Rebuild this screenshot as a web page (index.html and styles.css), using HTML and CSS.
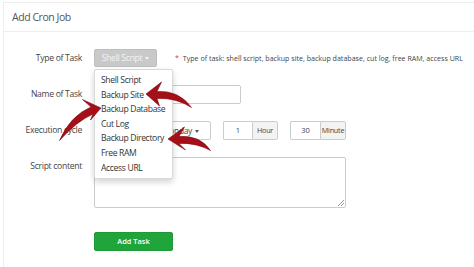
FILE: index.html
```html
<!DOCTYPE html>
<html>
<head>
<meta charset="utf-8">
<link rel="stylesheet" href="styles.css">
</head>
<body>
<div class="card">
  <div class="card-head">Add Cron Job</div>
  <div class="form">
    <div class="row">
      <div class="lbl">Type of Task</div>
      <div class="ctrl">
        <div class="dd">
          <div class="btn-grey">Shell Script <span class="caret"></span></div>
          <ul class="menu">
            <li>Shell Script</li>
            <li>Backup Site</li>
            <li>Backup Database</li>
            <li>Cut Log</li>
            <li>Backup Directory</li>
            <li>Free RAM</li>
            <li>Access URL</li>
          </ul>
        </div>
        <span class="note"><span class="req">*</span> Type of task: shell script, backup site, backup database, cut log, free RAM, access URL</span>
      </div>
    </div>
    <div class="row">
      <div class="lbl">Name of Task</div>
      <div class="ctrl">
        <div class="input name-input"></div>
      </div>
    </div>
    <div class="row">
      <div class="lbl">Execution cycle</div>
      <div class="ctrl">
        <div class="sel sel1"></div>
        <div class="sel sel2">Monday <span class="caret dark"></span></div>
        <div class="group g1">
          <div class="ginput">1</div>
          <div class="addon">Hour</div>
        </div>
        <div class="group g2">
          <div class="ginput">30</div>
          <div class="addon">Minute</div>
        </div>
      </div>
    </div>
    <div class="row row-tall">
      <div class="lbl">Script content</div>
      <div class="ctrl">
        <div class="textarea"><span class="grip"></span></div>
      </div>
    </div>
    <div class="row row-btn">
      <div class="lbl"></div>
      <div class="ctrl">
        <div class="btn-green">Add Task</div>
      </div>
    </div>
  </div>
</div>
<svg class="arrows" width="474" height="267" viewBox="0 0 474 267">
  <g fill="#a50f17" stroke="#7d0a10" stroke-width="0.6" stroke-linejoin="round">
    <path d="M146,94 L161.5,82 L157,91.5 Q179,90 191.5,107.5 Q176,97.5 157,98.5 L159.5,106 Z"/>
    <path d="M101,108 L82.5,99.5 L91,107 Q70,116 59.5,140.5 Q77,121 93,114 L90.5,120 Z"/>
    <path d="M168,139 L184.5,127 L179,136.5 Q200,135 210.5,150.5 Q196,142.5 179,143.5 L185.5,150 Z"/>
  </g>
</svg>
</body>
</html>
```
FILE: styles.css
```css
* { box-sizing: border-box; }
html, body { margin: 0; padding: 0; }
body {
  width: 474px;
  height: 267px;
  overflow: hidden;
  background: #fff;
  font-family: "Open Sans", "Noto Sans", sans-serif;
  color: #444;
  position: relative;
}
.card {
  margin: 2px 0 0 3px;
  width: 471px;
  height: 265px;
  border: 1px solid #eee;
  border-right: none;
  border-bottom: none;
  overflow: hidden;
}
.card-head {
  height: 29px;
  line-height: 28px;
  padding-left: 8px;
  font-size: 10.5px;
  letter-spacing: -0.45px;
  color: #555;
  border-bottom: 1px solid #eee;
}
.form {
  padding-top: 17px;
  display: flex;
  flex-direction: column;
  gap: 17px;
}
.row {
  display: flex;
  height: 19px;
  gap: 12px;
}
.row-tall { height: 51px; }
.row-btn { margin-top: 7px; }
.lbl {
  width: 78px;
  flex: none;
  text-align: right;
  font-size: 8.6px;
  letter-spacing: -0.3px;
  line-height: 19px;
  color: #444;
}
.ctrl {
  display: flex;
  align-items: flex-start;
  position: relative;
}
.dd { position: relative; }
.btn-grey {
  width: 63px;
  height: 18px;
  background: #c9c9c9;
  border: 1px solid #bdbdbd;
  border-radius: 2px;
  color: #f4f4f4;
  font-size: 8.6px;
  letter-spacing: -0.3px;
  line-height: 16px;
  text-align: center;
}
.caret {
  display: inline-block;
  width: 0;
  height: 0;
  border-left: 2.5px solid transparent;
  border-right: 2.5px solid transparent;
  border-top: 3px solid #f4f4f4;
  vertical-align: middle;
  margin-left: 1px;
}
.caret.dark { border-top-color: #555; }
.menu {
  position: absolute;
  top: 20px;
  left: 0;
  width: 79px;
  margin: 0;
  padding: 3px 0;
  list-style: none;
  background: #fff;
  border: 1px solid rgba(0,0,0,0.15);
  border-radius: 2px;
  box-shadow: 0 3px 6px rgba(0,0,0,0.18);
  z-index: 5;
}
.menu li {
  height: 14.6px;
  line-height: 14.6px;
  padding-left: 6px;
  font-size: 8.6px;
  letter-spacing: -0.35px;
  color: #333;
  white-space: nowrap;
}
.note {
  margin-left: 18px;
  font-size: 7.1px;
  line-height: 19px;
  color: #444;
  white-space: nowrap;
}
.req { color: #e0333f; margin-right: 2px; }
.input {
  height: 19px;
  border: 1px solid #ccc;
  border-radius: 2px;
  background: #fff;
}
.name-input { width: 147px; }
.sel {
  height: 19px;
  border: 1px solid #ccc;
  border-radius: 2px;
  background: #fff;
  font-size: 8.4px;
  letter-spacing: -0.3px;
  line-height: 17px;
  color: #444;
  text-align: center;
}
.sel1 { width: 50px; }
.sel2 { width: 61px; margin-left: 6px; }
.group {
  display: flex;
  height: 19px;
  margin-left: 12px;
}
.ginput {
  height: 19px;
  border: 1px solid #ccc;
  border-right: none;
  border-radius: 2px 0 0 2px;
  font-size: 7.5px;
  line-height: 17px;
  text-align: center;
  color: #444;
}
.g1 .ginput { width: 29px; }
.g2 .ginput { width: 30px; }
.addon {
  width: 26px;
  height: 19px;
  border: 1px solid #ccc;
  border-radius: 0 2px 2px 0;
  background: #f3f3f3;
  font-size: 7.2px;
  letter-spacing: -0.2px;
  line-height: 17px;
  text-align: center;
  color: #444;
}
.textarea {
  width: 252px;
  height: 51px;
  border: 1px solid #ccc;
  border-radius: 2px;
  position: relative;
}
.grip {
  position: absolute;
  right: 1px;
  bottom: 1px;
  width: 6px;
  height: 6px;
  background: linear-gradient(135deg, transparent 45%, #999 45%, #999 55%, transparent 55%, transparent 70%, #999 70%, #999 80%, transparent 80%);
}
.btn-green {
  width: 79px;
  height: 19px;
  background: #20a53a;
  border: 1px solid #1c9a35;
  border-radius: 2px;
  color: #fff;
  font-size: 7.4px;
  font-weight: 600;
  line-height: 17px;
  text-align: center;
}
.arrows {
  position: absolute;
  left: 0;
  top: 0;
  z-index: 10;
  pointer-events: none;
}
```
